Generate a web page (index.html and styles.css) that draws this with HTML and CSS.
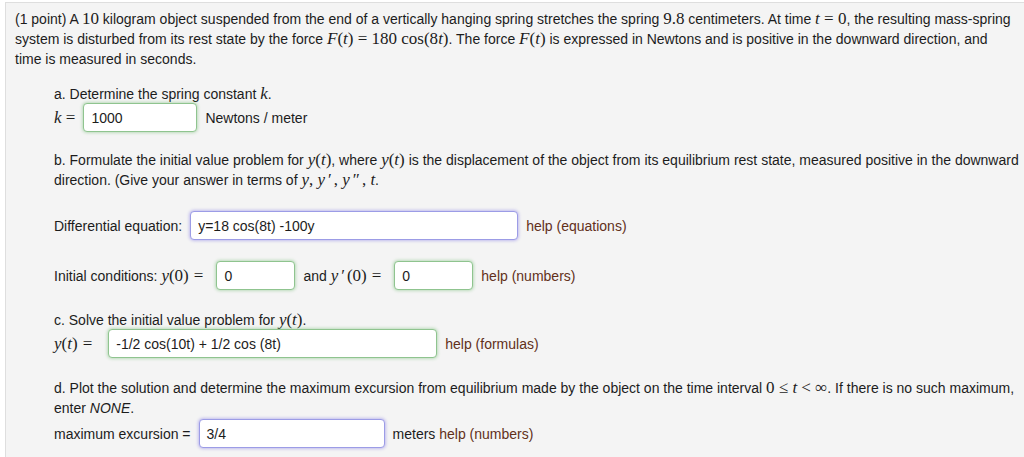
FILE: index.html
```html
<!DOCTYPE html>
<html>
<head>
<meta charset="utf-8">
<link rel="stylesheet" href="styles.css">
</head>
<body>
<div class="problem">
  <p class="intro">(1 point) A <span class="m">10</span> kilogram object suspended from the end of a vertically hanging spring stretches the spring <span class="m">9.8</span> centimeters. At time <span class="m"><i>t</i> = 0</span>, the resulting mass-spring system is disturbed from its rest state by the force <span class="m"><i>F</i>(<i>t</i>) = 180 cos(8<i>t</i>)</span>. The force <span class="m"><i>F</i>(<i>t</i>)</span> is expressed in Newtons and is positive in the downward direction, and time is measured in seconds.</p>

  <div class="part part-a">
    <p class="line">a. Determine the spring constant <span class="m"><i>k</i></span>.</p>
    <div class="row row-tight">
      <span class="m eq"><i>k</i> =</span>
      <span class="field good w-k">1000</span>
      <span>Newtons / meter</span>
    </div>
  </div>

  <div class="part part-b">
    <p class="line hang">b. Formulate the initial value problem for <span class="m"><i>y</i>(<i>t</i>)</span>, where <span class="m"><i>y</i>(<i>t</i>)</span> is the displacement of the object from its equilibrium rest state, measured positive in the downward direction. (Give your answer in terms of <span class="m"><i>y</i>, <i>y</i><span class="pr">′</span>, <i>y</i><span class="pr">″</span>, <i>t</i></span>.</p>
    <div class="row row-diff">
      <span>Differential equation:</span>
      <span class="field active w-diff">y=18 cos(8t) -100y</span>
      <a class="help">help (equations)</a>
    </div>
    <div class="row row-ic">
      <span>Initial conditions: <span class="m"><i>y</i>(0)<span class="rel">=</span></span></span>
      <span class="field good w-ic1">0</span>
      <span>and <span class="m"><i>y</i><span class="pr">′</span>(0)<span class="rel">=</span></span></span>
      <span class="field good w-ic2">0</span>
      <a class="help">help (numbers)</a>
    </div>
  </div>

  <div class="part part-c">
    <p class="line">c. Solve the initial value problem for <span class="m"><i>y</i>(<i>t</i>)</span>.</p>
    <div class="row row-tight">
      <span class="m eq eq-y"><i>y</i>(<i>t</i>)<span class="rel">=</span></span>
      <span class="field good w-y">-1/2 cos(10t) + 1/2 cos (8t)</span>
      <a class="help">help (formulas)</a>
    </div>
  </div>

  <div class="part part-d">
    <p class="line hang">d. Plot the solution and determine the maximum excursion from equilibrium made by the object on the time interval <span class="m">0 ≤ <i>t</i> &lt; ∞</span>. If there is no such maximum, enter <i>NONE</i>.</p>
    <div class="row row-last">
      <span>maximum excursion =</span>
      <span class="field active w-max">3/4</span>
      <span>meters <a class="help">help (numbers)</a></span>
    </div>
  </div>
</div>
</body>
</html>
```

FILE: styles.css
```css
html, body {
  margin: 0;
  padding: 0;
  background: #ffffff;
}

body {
  font-family: "Liberation Sans", Arial, sans-serif;
  font-size: 14px;
  color: #1c1c1c;
  overflow: hidden;
}

.problem {
  margin: 2px 0 0 5px;
  width: 1040px;
  min-height: 470px;
  box-sizing: border-box;
  border: 1px solid #dedede;
  border-right: none;
  background: #f4f4f4;
  padding: 6px 0 0 9px;
}

p {
  margin: 0;
  line-height: 20px;
}

.intro {
  width: 1000px;
}

.m {
  font-family: "Liberation Serif", "DejaVu Serif", serif;
  font-size: 17px;
  line-height: 1;
  white-space: nowrap;
}

.m i {
  font-style: italic;
}

.rel {
  margin: 0 5px;
}

.pr {
  margin: 0 2px 0 3px;
}

.part {
  margin-left: 39px;
}

.part-a { margin-top: 15px; }
.part-b { margin-top: 18px; }
.part-c { margin-top: 20px; }
.part-d { margin-top: 20px; }

.hang {
  width: 975px;
}

.row {
  display: flex;
  align-items: center;
  gap: 8px;
}

.row-tight { margin-top: -1px; }
.row-last { margin-top: 1px; }
.row-diff { margin-top: 21px; }
.row-ic { margin-top: 21px; }

.eq-y {
  margin-right: 3px;
}

.field {
  display: flex;
  align-items: center;
  box-sizing: border-box;
  height: 29px;
  padding: 0 7px;
  background: #ffffff;
  border-radius: 4px;
  font-size: 14px;
}

.good {
  border: 1px solid #8fc48f;
  box-shadow: 0 0 3px 1px rgba(120, 190, 120, 0.45);
}

.active {
  border: 1px solid #9c9ce6;
  box-shadow: 0 0 3px 1px rgba(130, 120, 230, 0.45);
}

.w-k { width: 114px; }
.w-diff { width: 328px; }
.w-ic1 { width: 79px; }
.w-ic2 { width: 79px; }
.w-y { width: 329px; }
.w-max { width: 186px; }

.help {
  color: #62301a;
  text-decoration: none;
}
```
